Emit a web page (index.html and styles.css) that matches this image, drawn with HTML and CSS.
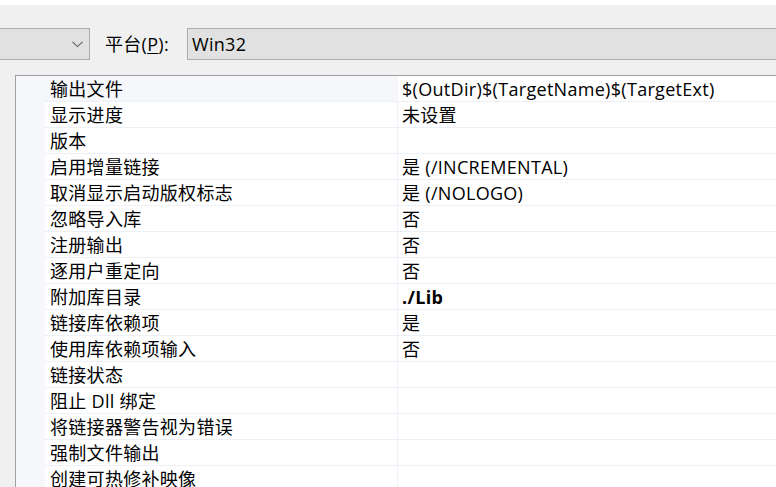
FILE: index.html
```html
<!DOCTYPE html>
<html lang="zh-CN">
<head>
<meta charset="utf-8">
<title>属性页</title>
<link rel="stylesheet" href="styles.css">
</head>
<body>
<div class="topstrip"></div>
<div class="toolbar">
  <div class="combo combo-config">
    <svg class="chev" width="11" height="7" viewBox="0 0 11 7"><path d="M0.5 0.8 L5.5 5.6 L10.5 0.8" fill="none" stroke="#606060" stroke-width="1.1"/></svg>
  </div>
  <span class="plat">平台(<u>P</u>):</span>
  <div class="combo combo-plat">Win32</div>
</div>
<div class="grid">
  <div class="row first"><div class="gut"></div><div class="name">输出文件</div><div class="val">$(OutDir)$(TargetName)$(TargetExt)</div></div>
  <div class="row"><div class="gut"></div><div class="name">显示进度</div><div class="val">未设置</div></div>
  <div class="row"><div class="gut"></div><div class="name">版本</div><div class="val"></div></div>
  <div class="row"><div class="gut"></div><div class="name">启用增量链接</div><div class="val">是 (/INCREMENTAL)</div></div>
  <div class="row"><div class="gut"></div><div class="name">取消显示启动版权标志</div><div class="val">是 (/NOLOGO)</div></div>
  <div class="row"><div class="gut"></div><div class="name">忽略导入库</div><div class="val">否</div></div>
  <div class="row"><div class="gut"></div><div class="name">注册输出</div><div class="val">否</div></div>
  <div class="row"><div class="gut"></div><div class="name">逐用户重定向</div><div class="val">否</div></div>
  <div class="row"><div class="gut"></div><div class="name">附加库目录</div><div class="val bold">./Lib</div></div>
  <div class="row"><div class="gut"></div><div class="name">链接库依赖项</div><div class="val">是</div></div>
  <div class="row"><div class="gut"></div><div class="name">使用库依赖项输入</div><div class="val">否</div></div>
  <div class="row"><div class="gut"></div><div class="name">链接状态</div><div class="val"></div></div>
  <div class="row"><div class="gut"></div><div class="name">阻止 Dll 绑定</div><div class="val"></div></div>
  <div class="row"><div class="gut"></div><div class="name">将链接器警告视为错误</div><div class="val"></div></div>
  <div class="row"><div class="gut"></div><div class="name">强制文件输出</div><div class="val"></div></div>
  <div class="row"><div class="gut"></div><div class="name">创建可热修补映像</div><div class="val"></div></div>
</div>
</body>
</html>
```

FILE: styles.css
```css
html, body {
  margin: 0;
  padding: 0;
  height: 100%;
  overflow: hidden;
}
body {
  background: #f0f0f0;
  font-family: "Open Sans", "Noto Sans CJK SC", sans-serif;
  font-size: 18px;
  letter-spacing: 0.3px;
  color: #000;
}
.topstrip {
  height: 5px;
  background: #fff;
}
.toolbar {
  height: 70px;
  box-sizing: border-box;
  padding-top: 23px;
  display: flex;
  align-items: flex-start;
}
.combo {
  box-sizing: border-box;
  height: 32px;
  border: 1px solid #adadad;
  background: #e1e1e1;
  display: flex;
  align-items: center;
}
.combo-config {
  width: 91px;
  margin-left: -1px;
  justify-content: flex-end;
  padding-right: 6px;
}
.chev {
  display: block;
  margin-top: 1px;
}
.plat {
  margin-left: 15px;
  height: 32px;
  line-height: 32px;
  width: 82px;
}
.plat u {
  text-decoration-thickness: 1px;
  text-underline-offset: 2px;
}
.combo-plat {
  flex: 1;
  margin-right: -10px;
  padding-left: 4px;
  line-height: 30px;
}
.grid {
  margin-left: 15px;
  border-left: 1px solid #a0a0a0;
  border-top: 1px solid #a0a0a0;
  background: #f5f7fa;
  height: 420px;
}
.row {
  display: grid;
  grid-template-columns: 29px 353px 1fr;
  height: 26px;
}
.gut {
  background: #f5f7fa;
}
.name, .val {
  box-sizing: border-box;
  background: #fff;
  border-bottom: 1px solid #edf1f7;
  padding-top: 1px;
  line-height: 25px;
  white-space: nowrap;
  overflow: hidden;
}
.name {
  padding-left: 5px;
  border-right: 1px solid #edf1f7;
}
.val {
  padding-left: 4px;
}
.row.first .name {
  background: #f5f7fa;
  border-right-color: #f5f7fa;
}
.bold {
  font-weight: bold;
}
```
